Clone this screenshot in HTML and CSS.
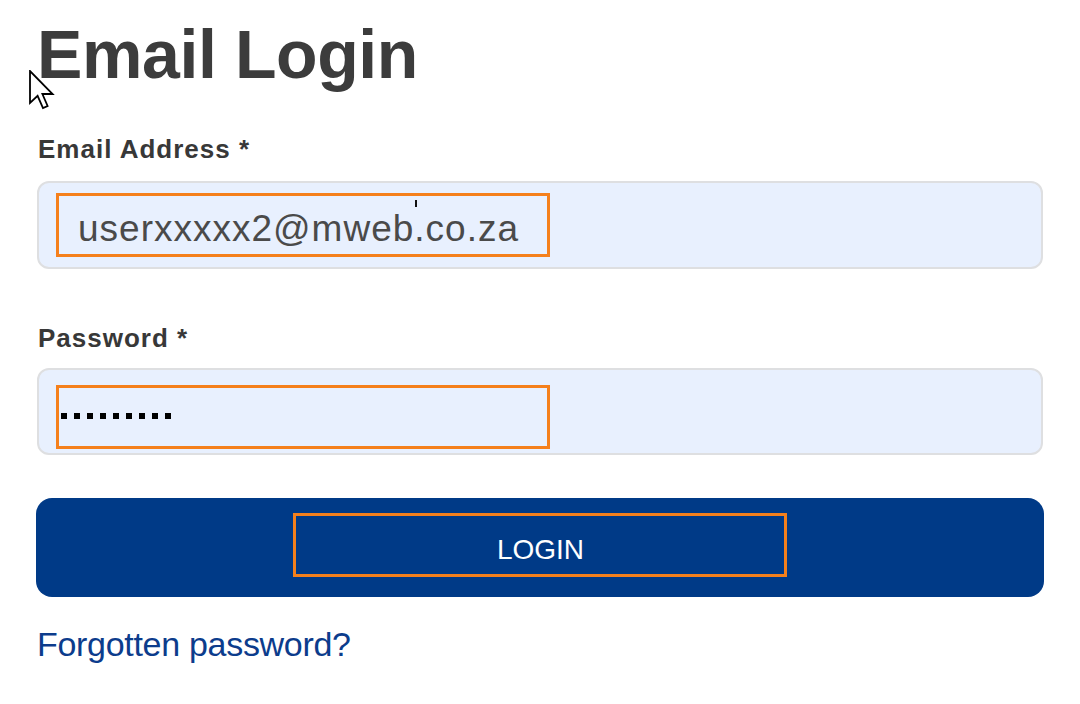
FILE: index.html
```html
<!DOCTYPE html>
<html lang="en">
<head>
<meta charset="utf-8">
<title>Email Login</title>
<link rel="stylesheet" href="styles.css">
</head>
<body>
<main class="page">
  <h1 class="title">Email Login</h1>
  <form class="form">
    <label class="label">Email Address *</label>
    <div class="field field-email">
      <span class="mark mark-email"><span class="value">userxxxxx2@mweb.co.za</span></span>
      <span class="caret"></span>
    </div>
    <label class="label label-pass">Password *</label>
    <div class="field field-pass">
      <span class="mark mark-pass">
        <span class="dots"><i></i><i></i><i></i><i></i><i></i><i></i><i></i><i></i><i></i></span>
      </span>
    </div>
    <div class="btn">
      <span class="mark mark-btn"><span class="btn-text">LOGIN</span></span>
    </div>
    <a class="forgot" href="#">Forgotten password?</a>
  </form>
  <svg class="pointer" width="26" height="40" viewBox="0 0 13 20" aria-hidden="true">
    <path d="M0.5 0.5 L0.5 16.5 L4.3 12.9 L7 19 L9.3 18 L6.7 12 L11.8 12 Z" fill="#fff" stroke="#000" stroke-width="0.9" stroke-linejoin="miter"/>
  </svg>
</main>
</body>
</html>
```
FILE: styles.css
```css
html, body {
  margin: 0;
  padding: 0;
  background: #ffffff;
}
body {
  width: 1080px;
  height: 704px;
  overflow: hidden;
  font-family: "Liberation Sans", Arial, sans-serif;
}
.page {
  position: relative;
  padding: 20px 36px 0 36px;
}
.title {
  margin: 0;
  font-size: 68px;
  line-height: 68px;
  font-weight: 700;
  letter-spacing: -0.4px;
  color: #3c3c3c;
  padding-left: 1px;
}
.form {
  display: flex;
  flex-direction: column;
  margin-top: 46px;
}
.label {
  display: block;
  font-size: 26px;
  line-height: 30px;
  font-weight: 700;
  letter-spacing: 1px;
  color: #383838;
  padding-left: 2px;
  margin-bottom: 17px;
}
.label-pass {
  margin-top: 54px;
  margin-bottom: 15px;
}
.field {
  position: relative;
  box-sizing: border-box;
  margin: 0 1px;
  height: 88px;
  border: 2px solid #dedfe1;
  border-radius: 12px;
  background: #e8f0fe;
  display: flex;
  align-items: flex-start;
  padding: 10px 0 0 17px;
}
.field-pass {
  height: 87px;
  padding-top: 15px;
  padding-left: 17px;
}
.mark {
  box-sizing: border-box;
  width: 494px;
  height: 64px;
  border: 3px solid #f5801c;
  display: flex;
}
.mark-email {
  padding: 13px 0 0 19px;
}
.value {
  font-size: 37px;
  line-height: 40px;
  letter-spacing: 1px;
  color: #4a4a4a;
}
.caret {
  position: absolute;
  left: 376px;
  top: 17px;
  width: 2px;
  height: 7px;
  background: #111;
}
.mark-pass {
  align-items: center;
  padding-left: 2px;
}
.dots {
  display: flex;
  gap: 7px;
  margin-top: -3px;
}
.dots i {
  display: block;
  width: 6px;
  height: 6px;
  background: #000;
}
.btn {
  box-sizing: border-box;
  height: 99px;
  margin-top: 43px;
  border-radius: 16px;
  background: #003a87;
  display: flex;
  justify-content: center;
  align-items: flex-start;
  padding-top: 15px;
}
.mark-btn {
  justify-content: center;
  padding-top: 18px;
}
.btn-text {
  font-size: 28px;
  line-height: 32px;
  color: #ffffff;
  padding-left: 1px;
}
.forgot {
  align-self: flex-start;
  margin-top: 27px;
  font-size: 34px;
  line-height: 40px;
  letter-spacing: -0.3px;
  color: #0c3c8c;
  text-decoration: none;
  padding-left: 1px;
}
.pointer {
  position: absolute;
  left: 29px;
  top: 70px;
}
```
